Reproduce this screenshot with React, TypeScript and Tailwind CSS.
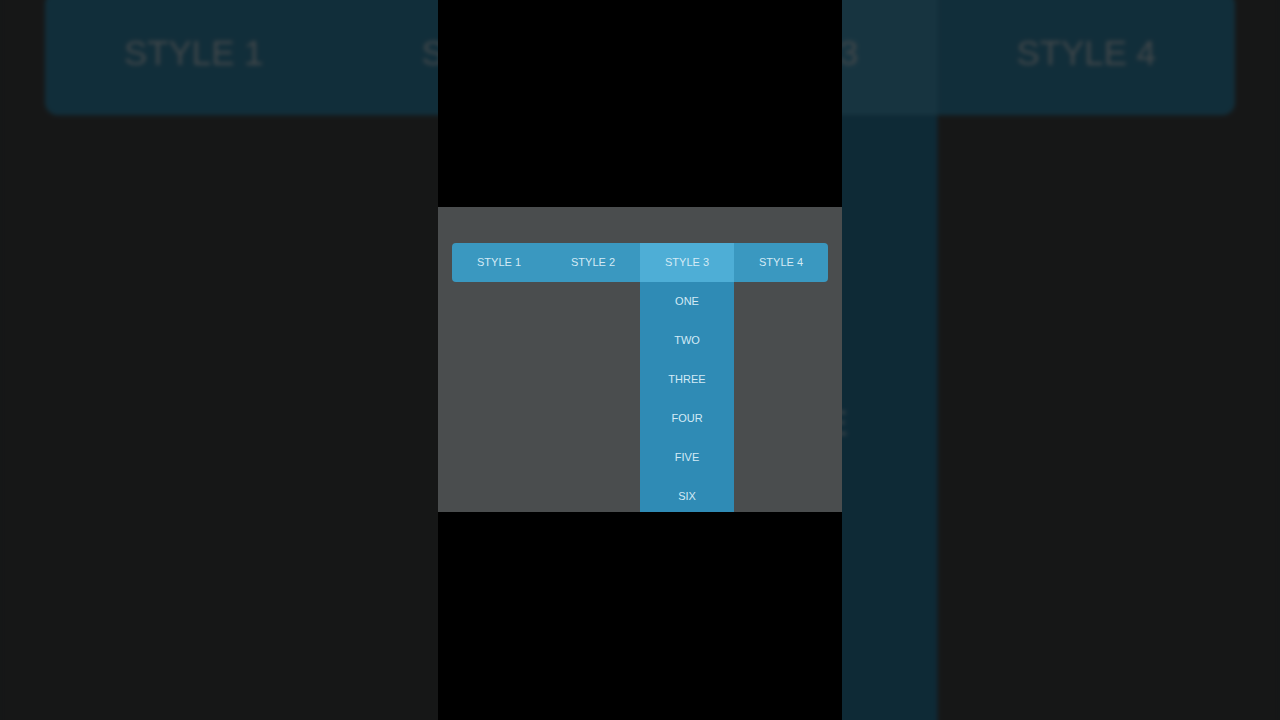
const tabs = ['Style 1', 'Style 2', 'Style 3', 'Style 4']
const submenu = ['One', 'Two', 'Three', 'Four', 'Five', 'Six']

function NavDemo() {
  return (
    <div className="h-[305px] w-[404px] overflow-hidden bg-[#4a4d4e] px-[14px] pt-[36px] font-['Liberation_Sans',Arial,sans-serif] text-[11px] uppercase text-[#d3eaf5]">
      <ul className="flex h-[39px] w-[376px] rounded-[4px] bg-[#3a98c0]">
        {tabs.map((tab, i) => (
          <li key={tab} className="relative w-[94px]">
            <a
              className={
                i === 2
                  ? 'flex h-[39px] items-center justify-center bg-[#4eaed6]'
                  : 'flex h-[39px] items-center justify-center'
              }
            >
              {tab}
            </a>
            {i === 2 && (
              <ul className="absolute left-0 top-[39px] w-[94px] bg-[#2f8bb5]">
                {submenu.map((item) => (
                  <li key={item} className="flex h-[39px] items-center justify-center">
                    {item}
                  </li>
                ))}
              </ul>
            )}
          </li>
        ))}
      </ul>
    </div>
  )
}

export default function App() {
  return (
    <div className="relative h-[720px] w-[1280px] overflow-hidden bg-[#161717]">
      {/* blurred, dimmed backdrop of the same clip */}
      <div aria-hidden className="absolute inset-0 flex items-center justify-center">
        <div className="scale-[3.165] blur-[0.6px] brightness-[0.3]">
          <NavDemo />
        </div>
      </div>
      <div className="relative mx-auto flex h-full w-[404px] flex-col bg-black pt-[207px]">
        <NavDemo />
      </div>
    </div>
  )
}
